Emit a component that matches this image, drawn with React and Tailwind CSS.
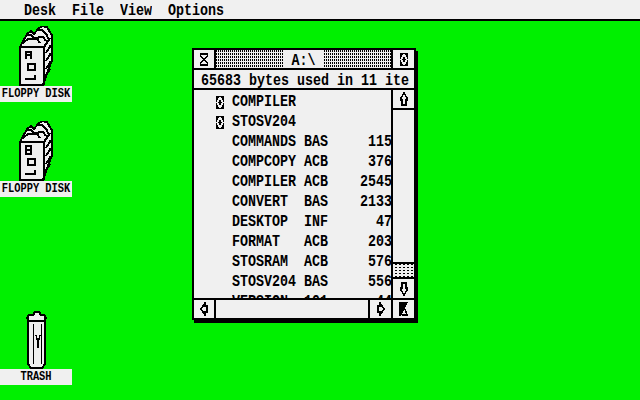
import React from "react";

const mono = "font-['Liberation_Mono',monospace] font-bold text-[13.34px] text-black whitespace-pre";

const rows = [
  { folder: true, text: "COMPILER" },
  { folder: true, text: "STOSV204" },
  { text: "COMMANDS BAS     115" },
  { text: "COMPCOPY ACB     376" },
  { text: "COMPILER ACB    2545" },
  { text: "CONVERT  BAS    2133" },
  { text: "DESKTOP  INF      47" },
  { text: "FORMAT   ACB     203" },
  { text: "STOSRAM  ACB     576" },
  { text: "STOSV204 BAS     556" },
  { text: "VERSION  101      44" },
];

// the Atari system font is tall and narrow, so stretch the text a bit
function Tall({ children, className = "" }) {
  return <span className={`inline-block origin-center scale-y-[1.3] ${mono} ${className}`}>{children}</span>;
}

function Drawer({ letter }) {
  return (
    <svg width="34" height="60" viewBox="0 0 34 60" shapeRendering="crispEdges" className="block">
      <path d="M1 21 L8 8 L12 5 L15 8 L19 3 L23 0 L28 1 L32 8 L33 9 L33 34 L24 59 L1 59 Z" fill="#f0f0f0" stroke="#000" strokeWidth="2" />
      <path d="M4 17 L9 13 L18 13 L21 17 M8 9 L12 9 L15 12 L24 11 L27 15 M19 4 L23 4 L28 9 L29 13" fill="none" stroke="#000" strokeWidth="2" />
      <path d="M1 21 H25 V59" fill="none" stroke="#000" strokeWidth="2" />
      <path d="M25 21 L31 12 M27 27 L32 19 M27 35 L32 27 M27 43 L32 35 M26 51 L31 43" stroke="#000" strokeWidth="2" />
      {letter === "A" ? (
        <path d="M7 33 V26 H12 V33 M7 29 H12" fill="none" stroke="#000" strokeWidth="2" />
      ) : (
        <path d="M7 33 V25 H12 V33 Z M7 29 H12" fill="none" stroke="#000" strokeWidth="2" />
      )}
      <rect x="9" y="38" width="7" height="6" fill="none" stroke="#000" strokeWidth="2" />
      <path d="M6 53 H16 V49" fill="none" stroke="#000" strokeWidth="2" />
    </svg>
  );
}

function Trash() {
  return (
    <svg width="22" height="59" viewBox="0 0 22 59" shapeRendering="crispEdges" className="block">
      <path d="M3 11 L3 54 L6 58 L17 58 L20 54 L20 11 Z" fill="#f0f0f0" stroke="#000" strokeWidth="2" />
      <path d="M2 8 L4 5 L8 5 L10 2 L14 2 L16 5 L19 5 L21 8 L19 11 L4 11 Z" fill="#f0f0f0" stroke="#000" strokeWidth="2" />
      <path d="M8 14 V54 M16 14 V54" stroke="#000" strokeWidth="1" />
      <path d="M11 25 L13 33 L15 25 M13 33 V38" fill="none" stroke="#000" strokeWidth="1.5" />
    </svg>
  );
}

function DesktopIcon({ label, className, children }) {
  return (
    <div className={`absolute left-0 flex w-[72px] flex-col items-center ${className}`}>
      {children}
      <div className="h-[16px] w-full bg-[#f0f0f0] text-center">
        <span className="block scale-y-[1.3] font-['Liberation_Mono',monospace] text-[10.4px] leading-[15px] font-bold text-black whitespace-pre">{label}</span>
      </div>
    </div>
  );
}

function Glyph({ d }) {
  return (
    <svg width="8" height="14" viewBox="0 0 8 14" shapeRendering="crispEdges" className="block">
      <path d={d} fill="none" stroke="#000" strokeWidth="1.6" />
    </svg>
  );
}

const Diamond = () => (
  <svg width="8" height="13" viewBox="0 0 8 13" shapeRendering="crispEdges" className="block">
    <path d="M0 0 H8 V13 H0 Z" fill="#000" />
    <path d="M4 0 L8 6.5 L4 13 L0 6.5 Z" fill="#f0f0f0" />
    <path d="M4 3.5 L6 6.5 L4 9.5 L2 6.5 Z" fill="#000" />
  </svg>
);

const Close = () => (
  <svg width="8" height="13" viewBox="0 0 8 13" shapeRendering="crispEdges" className="block">
    <path d="M0 1 H8 M0 12 H8" stroke="#000" strokeWidth="2" />
    <path d="M0 2 L8 11 M8 2 L0 11" stroke="#000" strokeWidth="1.5" />
  </svg>
);

const UpArrow = () => <Glyph d="M4 1 L7 6 V8 H6 V13 H2 V8 H1 V6 Z" />;
const DownArrow = () => <Glyph d="M2 1 H6 V6 H7 V8 L4 13 L1 8 V6 H2 Z" />;
const LeftArrow = () => <Glyph d="M1 7 L5 1 V4 H7 V10 H5 V13 Z" />;
const RightArrow = () => <Glyph d="M7 7 L3 1 V4 H1 V10 H3 V13 Z" />;

const SizeBox = () => (
  <svg width="9" height="14" viewBox="0 0 9 14" shapeRendering="crispEdges" className="block">
    <path d="M0 0 H9 L2 14 H0 Z" fill="#000" />
    <path d="M6 7 L8 13 H3" fill="none" stroke="#000" strokeWidth="1.5" />
  </svg>
);

function Win() {
  return (
    <div className="absolute left-[192px] top-[27px] flex h-[272px] w-[224px] flex-col border-2 border-black bg-[#f0f0f0] shadow-[2px_3px_0_#000]">
      {/* title bar */}
      <div className="flex h-[20px] shrink-0 border-b-2 border-black">
        <div className="flex w-[22px] shrink-0 items-center justify-center border-r-2 border-black"><Close /></div>
        <div className="flex flex-1 justify-center bg-[repeating-linear-gradient(0deg,#f0f0f0_0_1px,transparent_1px_3px),repeating-linear-gradient(90deg,#000_0_1px,#f0f0f0_1px_2px)]">
          <div className="bg-[#f0f0f0] px-2 leading-[16px]"><Tall>A:\</Tall></div>
        </div>
        <div className="flex w-[23px] shrink-0 items-center justify-center border-l-2 border-black"><Diamond /></div>
      </div>
      {/* info line */}
      <div className="h-[20px] shrink-0 overflow-hidden border-b-2 border-black pl-[7px] leading-[16px]">
        <Tall>65683 bytes used in 11 ite</Tall>
      </div>
      {/* file list */}
      <div className="flex min-h-0 flex-1">
        <div className="min-w-0 flex-1 overflow-hidden pt-[2px]">
          {rows.map((r) => (
            <div key={r.text} className="flex h-[20px] items-center pl-[22px]">
              <div className="w-[16px] shrink-0">{r.folder && <Diamond />}</div>
              <Tall className="leading-[20px]">{r.text}</Tall>
            </div>
          ))}
        </div>
        <div className="flex w-[23px] shrink-0 flex-col border-l-2 border-black">
          <div className="flex h-[20px] shrink-0 items-center justify-center border-b-2 border-black"><UpArrow /></div>
          <div className="flex-1" />
          <div className="h-[17px] shrink-0 border-y-2 border-black bg-[conic-gradient(#000_25%,#f0f0f0_0)] bg-[length:4px_3px]" />
          <div className="flex h-[19px] shrink-0 items-center justify-center"><DownArrow /></div>
        </div>
      </div>
      {/* bottom bar */}
      <div className="flex h-[20px] shrink-0 border-t-2 border-black">
        <div className="flex w-[22px] shrink-0 items-center justify-center border-r-2 border-black"><LeftArrow /></div>
        <div className="flex-1" />
        <div className="flex w-[23px] shrink-0 items-center justify-center border-l-2 border-black"><RightArrow /></div>
        <div className="flex w-[23px] shrink-0 items-center justify-center border-l-2 border-black"><SizeBox /></div>
      </div>
    </div>
  );
}

export default function App() {
  return (
    <div className="flex h-[400px] w-[640px] flex-col overflow-hidden bg-[#00f000]">
      <div className="flex h-[21px] shrink-0 gap-[16px] border-b-2 border-black bg-[#f0f0f0] pl-[24px] leading-[21px]">
        <Tall>Desk</Tall>
        <Tall>File</Tall>
        <Tall>View</Tall>
        <Tall>Options</Tall>
      </div>
      <div className="relative flex-1">
        <DesktopIcon label="FLOPPY DISK" className="top-[5px]">
          <Drawer letter="A" />
        </DesktopIcon>
        <DesktopIcon label="FLOPPY DISK" className="top-[100px]">
          <Drawer letter="B" />
        </DesktopIcon>
        <DesktopIcon label="TRASH" className="top-[289px]">
          <Trash />
        </DesktopIcon>
        <Win />
      </div>
    </div>
  );
}
